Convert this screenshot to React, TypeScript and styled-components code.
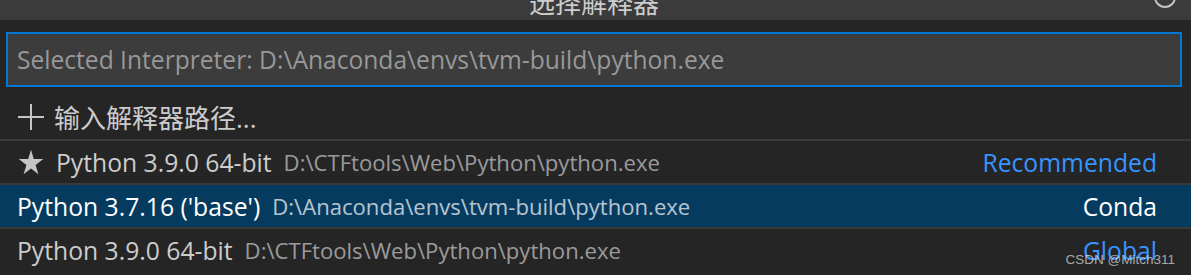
import styled, { createGlobalStyle } from 'styled-components'

const GlobalStyle = createGlobalStyle`
  html, body {
    margin: 0;
    padding: 0;
    background: #252526;
  }
  * {
    box-sizing: border-box;
  }
`

const FONT = `'Open Sans', 'Noto Sans CJK SC', sans-serif`

interface IItem {
  label: string
  description?: string
  detail?: string
  icon?: 'star' | 'add'
}

const items: IItem[] = [
  {
    label: 'Python 3.9.0 64-bit',
    description: 'D:\\CTFtools\\Web\\Python\\python.exe',
    detail: 'Recommended',
    icon: 'star',
  },
  {
    label: "Python 3.7.16 ('base')",
    description: 'D:\\Anaconda\\envs\\tvm-build\\python.exe',
    detail: 'Conda',
  },
  {
    label: 'Python 3.9.0 64-bit',
    description: 'D:\\CTFtools\\Web\\Python\\python.exe',
    detail: 'Global',
  },
]

// codicon star-full
const StarIcon = () => (
  <svg width="30" height="30" viewBox="0 0 16 16" fill="#c5c5c5">
    <path d="M9.595 6.252L8 1 6.405 6.252H1l4.373 3.4L3.75 15 8 11.695 12.25 15l-1.623-5.348L15 6.252H9.595z" />
  </svg>
)

const AddIcon = () => (
  <svg width="26" height="26" viewBox="0 0 26 26">
    <path d="M13 0v26M0 13h26" stroke="#c5c5c5" strokeWidth="2" />
  </svg>
)

export default function App() {
  const selected = 1
  return (
    <Page>
      <GlobalStyle />
      <TitleBar>
        <span />
        <TitleText>选择解释器</TitleText>
        <CloseButton>
          <svg width="24" height="24" viewBox="0 0 24 24">
            <circle cx="12" cy="12" r="10" fill="none" stroke="#c5c5c5" strokeWidth="2" />
          </svg>
        </CloseButton>
      </TitleBar>
      <InputBox readOnly placeholder="Selected Interpreter: D:\Anaconda\envs\tvm-build\python.exe" />
      <List>
        <Row>
          <IconBox>
            <AddIcon />
          </IconBox>
          <CjkLabel>输入解释器路径...</CjkLabel>
        </Row>
        {items.map((item, i) => (
          <Row key={i} $separated $active={i === selected}>
            {item.icon === 'star' && (
              <IconBox>
                <StarIcon />
              </IconBox>
            )}
            <Label $active={i === selected}>{item.label}</Label>
            <Description $active={i === selected}>{item.description}</Description>
            <Detail $active={i === selected}>{item.detail}</Detail>
          </Row>
        ))}
      </List>
      <Watermark>CSDN @Mitch311</Watermark>
    </Page>
  )
}

const Page = styled.div`
  position: relative;
  width: 1191px;
  height: 275px;
  overflow: hidden;
  background: #252526;
  font-family: ${FONT};
`

const TitleBar = styled.div`
  height: 20px;
  background: #3b3b3b;
  overflow: hidden;
  display: grid;
  grid-template-columns: 1fr auto 1fr;
  align-items: start;
`

const TitleText = styled.div`
  font-family: 'Noto Sans CJK SC', sans-serif;
  font-size: 26px;
  line-height: 26px;
  color: #cccccc;
  margin-top: -11px;
  margin-right: 3px;
`

const CloseButton = styled.div`
  justify-self: end;
  margin-right: 14px;
  margin-top: -15px;
  line-height: 0;
`

const InputBox = styled.input`
  display: block;
  width: calc(100% - 15px);
  height: 55px;
  margin: 12px 9px 0 6px;
  padding: 0 9px;
  border: 2px solid #0078d4;
  outline: none;
  background: #3c3c3c;
  font-family: ${FONT};
  font-size: 24.6px;
  color: #cccccc;

  &::placeholder {
    color: #989898;
  }
`

const List = styled.div`
  margin-top: 8px;
`

const Row = styled.div<{ $separated?: boolean; $active?: boolean }>`
  display: flex;
  align-items: center;
  height: 44px;
  padding: 0 34px 0 17px;
  border-top: ${(p) => (p.$separated ? '2px solid #3a3a3a' : 'none')};
  background: ${(p) => (p.$active ? '#063b60' : 'transparent')};
  font-size: 24.7px;
  white-space: nowrap;
`

const IconBox = styled.div`
  width: 28px;
  height: 30px;
  margin-right: 11px;
  display: flex;
  justify-content: center;
  align-items: center;
`

const Label = styled.span<{ $active?: boolean }>`
  color: ${(p) => (p.$active ? '#ffffff' : '#cccccc')};
`

const CjkLabel = styled.span`
  color: #cccccc;
  font-size: 26px;
  margin-left: -2px;
`

const Description = styled.span<{ $active?: boolean }>`
  margin-left: 12px;
  font-size: 0.895em;
  color: ${(p) => (p.$active ? '#ffffff' : '#cccccc')};
  opacity: 0.7;
`

const Detail = styled.span<{ $active?: boolean }>`
  margin-left: auto;
  color: ${(p) => (p.$active ? '#ffffff' : '#3794ff')};
`

const Watermark = styled.div`
  position: absolute;
  right: 16px;
  bottom: 8px;
  font-family: 'Liberation Sans', Arial, sans-serif;
  font-size: 13.5px;
  color: rgba(225, 225, 225, 0.7);
`
